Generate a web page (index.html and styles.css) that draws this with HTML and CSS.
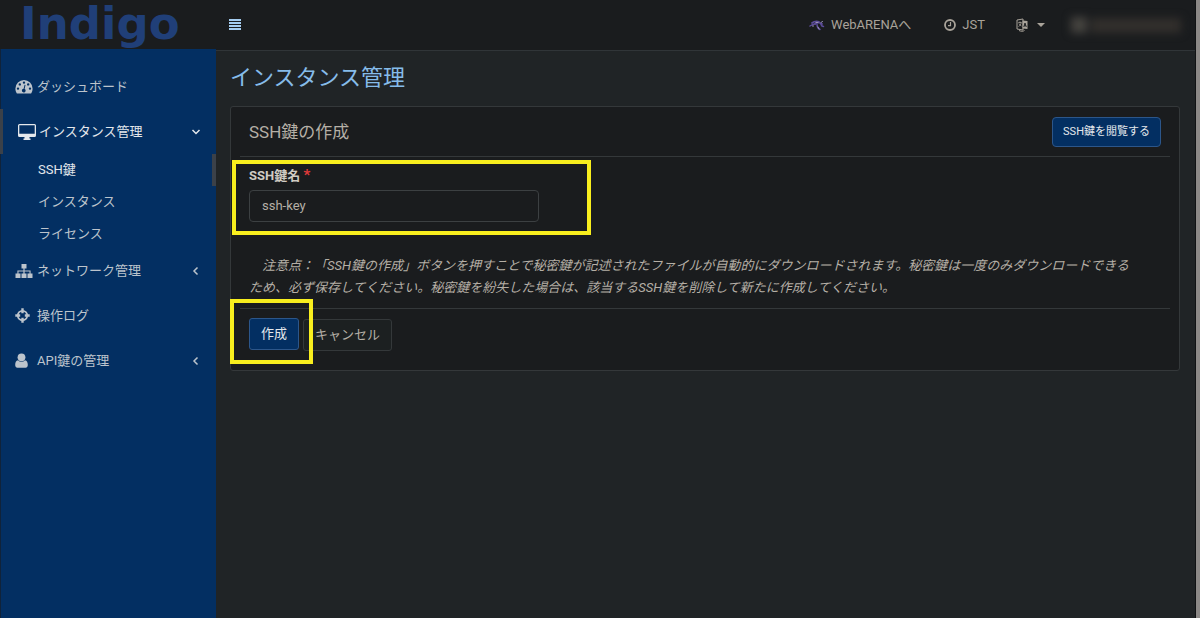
FILE: index.html
```html
<!DOCTYPE html>
<html lang="ja">
<head>
<meta charset="utf-8">
<meta name="viewport" content="width=device-width, initial-scale=1">
<title>Indigo</title>
<link rel="stylesheet" href="styles.css">
</head>
<body>
<div class="app">
  <aside class="sidebar">
    <a class="logo" href="#">Indigo</a>
    <nav class="menu">
      <a class="menu-item" href="#">
        <svg class="icon" width="18" height="16" viewBox="0 0 18 16" fill="currentColor"><path fill-rule="evenodd" d="M9 1a8.6 8.6 0 0 0-8.6 8.6c0 1.7.4 3.2 1.3 4.6.2.3.4.4.7.4h13.200c.3 0 .5-.1.7-.4.9-1.400 1.300-2.900 1.300-4.600A8.600 8.600 0 0 0 9 1zM3 8.400a1.200 1.200 0 1 1 0 2.400 1.200 1.200 0 0 1 0-2.400zM4.800 4.200a1.200 1.200 0 1 1 0 2.400 1.200 1.200 0 0 1 0-2.400zM9 2.400a1.200 1.200 0 1 1 0 2.400 1.200 1.200 0 0 1 0-2.400zM13.200 4.200a1.200 1.200 0 1 1 0 2.400 1.200 1.200 0 0 1 0-2.400zM15 8.400a1.200 1.200 0 1 1 0 2.400 1.200 1.200 0 0 1 0-2.400zM9.600 5.800l.9.2-.9 3.900c.8.400 1.200 1.200 1 2.100a1.900 1.900 0 1 1-2-2.300z"/></svg>
        <span>ダッシュボード</span>
      </a>
      <a class="menu-item is-active" href="#">
        <svg class="icon icon-screen" width="18" height="16" viewBox="0 0 18 16" fill="currentColor"><path fill-rule="evenodd" d="M1.500 0h15A1.500 1.500 0 0 1 18 1.500v10a1.500 1.500 0 0 1-1.500 1.500h-5v1.600h1V16h-7v-1.400h1V13h-5A1.500 1.500 0 0 1 0 11.500v-10A1.500 1.500 0 0 1 1.500 0zM1.300 1.300v8.400h15.400V1.300z"/></svg>
        <span>インスタンス管理</span>
        <svg class="arrow" width="10" height="10" viewBox="0 0 10 10"><path d="M1.500 3l3.500 3.500L8.500 3" fill="none" stroke="currentColor" stroke-width="1.500"/></svg>
      </a>
      <div class="submenu">
        <a class="sub-item is-current" href="#">SSH鍵</a>
        <a class="sub-item" href="#">インスタンス</a>
        <a class="sub-item" href="#">ライセンス</a>
      </div>
      <a class="menu-item" href="#">
        <svg class="icon" width="18" height="16" viewBox="0 0 18 16" fill="currentColor"><path d="M6.500 1h5v4.500H9.600v2h6v3h1.900V15H12.500v-4.500h2V8.600H9.600v1.900h1.900V15h-5v-4.500h1.900V8.600H3.500v1.900h2V15H.5v-4.500h1.900v-3h6v-2H6.500z"/></svg>
        <span>ネットワーク管理</span>
        <svg class="arrow" width="10" height="10" viewBox="0 0 10 10"><path d="M6.500 1.500L3 5l3.500 3.500" fill="none" stroke="currentColor" stroke-width="1.500"/></svg>
      </a>
      <a class="menu-item" href="#">
        <svg class="icon" width="18" height="16" viewBox="0 0 18 16"><g fill="none" stroke="currentColor"><circle cx="7.500" cy="7.500" r="4.700" stroke-width="1.800"/><path stroke-width="2.400" d="M7.500 .3v4.900M7.500 9.800v4.900M.3 7.500h4.900M9.800 7.500h4.900"/></g></svg>
        <span>操作ログ</span>
      </a>
      <a class="menu-item" href="#">
        <svg class="icon" width="18" height="16" viewBox="0 0 18 16" fill="currentColor"><circle cx="6.500" cy="4.300" r="3.900"/><path d="M3 7.200C1 7.600.2 9.400.2 12.100c0 1.500.9 2.700 2.200 2.700h8.200c1.300 0 2.200-1.200 2.200-2.700 0-2.700-.8-4.500-2.800-4.900a4.800 4.800 0 0 1-7 0z"/></svg>
        <span>API鍵の管理</span>
        <svg class="arrow" width="10" height="10" viewBox="0 0 10 10"><path d="M6.500 1.500L3 5l3.500 3.500" fill="none" stroke="currentColor" stroke-width="1.500"/></svg>
      </a>
    </nav>
  </aside>

  <div class="page">
    <header class="topbar">
      <button class="toggle" type="button" aria-label="メニュー">
        <svg width="12" height="12" viewBox="0 0 12 12" fill="currentColor"><path d="M0 0h12v2H0zM0 3h12v2H0zM0 6h12v2H0zM0 9h12v2H0z"/></svg>
      </button>
      <a class="top-link link-arena" href="#">
        <svg width="16" height="14" viewBox="0 0 16 14" fill="none" stroke="#5c4c99" stroke-linecap="round"><path stroke-width="1.800" d="M3 5c2-1.500 4-2 7-1.200M6 6c2-1.500 5-1.500 7 0"/><path stroke-width="1.500" d="M6 6c-2 0-3.500 1-5 2M8 6.500c0 2.500 1 4 3 5M12 6.500c.5 1.500 1.500 2 2.500 2"/><path stroke="#9a91b5" stroke-width="1" d="M4 7.500v1M7 4.500h2M12 4.500l1.500-1M9 9l1 2"/></svg>
        <span>WebARENAへ</span>
      </a>
      <a class="top-link link-zone" href="#">
        <svg width="12" height="12" viewBox="0 0 12 12" fill="none" stroke="currentColor"><circle cx="6" cy="6" r="5" stroke-width="1.800"/><path stroke-width="1.200" d="M6.500 3v3.600H4"/></svg>
        <span>JST</span>
      </a>
      <button class="top-link link-lang" type="button" aria-label="言語">
        <svg width="12" height="14" viewBox="0 0 12 14"><path d="M1 2l6-1v11l-6-1z" fill="none" stroke="currentColor"/><path d="M6.500 2.500L11.500 3v8l-5-.5z" fill="currentColor"/><path d="M2.300 4.500h3.200M4 3.500v1M2.500 8.500c1.500-.7 2.400-2 2.700-4M3 5.500c.5 1.200 1.300 2 2.500 2.500" stroke="currentColor" stroke-width=".8" fill="none"/><path d="M7.800 9L9 5l1.300 4M8.200 7.700h1.700" stroke="#1a1c1e" stroke-width=".9" fill="none"/><path d="M3 12.500c2 1 4 1 5.500 0" stroke="currentColor" fill="none"/></svg>
        <svg width="8" height="4" viewBox="0 0 8 4" fill="currentColor"><path d="M0 0h8L4 4z"/></svg>
      </button>
      <div class="account"><i class="avatar"></i><i class="account-name"></i></div>
    </header>

    <main class="content">
      <h1 class="page-title">インスタンス管理</h1>
      <form class="panel">
        <div class="panel-head">
          <h2 class="panel-title">SSH鍵の作成</h2>
          <button class="btn btn-primary btn-small" type="button">SSH鍵を閲覧する</button>
        </div>
        <div class="field">
          <label class="label" for="key-name">SSH鍵名 <span class="required">*</span></label>
          <input class="input" id="key-name" type="text" value="ssh-key">
        </div>
        <p class="note">　注意点：「SSH鍵の作成」ボタンを押すことで秘密鍵が記述されたファイルが自動的にダウンロードされます。秘密鍵は一度のみダウンロードできるため、必ず保存してください。秘密鍵を紛失した場合は、該当するSSH鍵を削除して新たに作成してください。</p>
        <div class="actions">
          <span class="marked"><button class="btn btn-primary" type="button">作成</button></span>
          <button class="btn btn-cancel" type="button">キャンセル</button>
        </div>
      </form>
    </main>
  </div>
  <div class="scroll-edge"></div>
</div>
</body>
</html>
```
FILE: styles.css
```css
*,
*::after {
  box-sizing: border-box;
}

body {
  margin: 0;
  background: #202426;
  color: #b5afa6;
  font-family: Roboto, "Noto Sans CJK JP", sans-serif;
  font-size: 13px;
  line-height: 22px;
}

a {
  color: inherit;
  text-decoration: none;
}

button,
input {
  font: inherit;
  color: inherit;
}

svg {
  display: block;
  flex: none;
}

.app {
  display: flex;
  min-height: 100vh;
}

.sidebar {
  flex: none;
  width: 216px;
  background: #032f62;
  border-left: 1px solid #10233a;
}

.logo {
  display: block;
  height: 49px;
  margin-left: -1px;
  padding-left: 20px;
  background: #1a1c1e;
  color: #203f78;
  font: bold 45px/48px "DejaVu Sans", sans-serif;
}

.menu {
  padding-top: 15px;
  color: #bcc4cc;
}

.menu-item {
  display: flex;
  align-items: center;
  gap: 4px;
  height: 45px;
  margin-left: -1px;
  padding: 0 15px;
}

.menu-item.is-active {
  gap: 3px;
  border-left: 3px solid #3b4149;
  color: #e4e8ec;
}

.arrow {
  margin-left: auto;
}

.submenu {
  margin-bottom: -2px;
}

.sub-item {
  display: flex;
  align-items: center;
  height: 32px;
  padding-left: 37px;
  border-right: 4px solid transparent;
}

.sub-item.is-current {
  border-right-color: #3b4149;
  color: #e4e8ec;
}

.page {
  flex: 1;
  min-width: 0;
}

.topbar {
  display: flex;
  align-items: center;
  height: 51px;
  padding: 0 14px 0 13px;
  background: #1a1c1e;
  border-bottom: 1px solid #303538;
}

.toggle {
  margin-right: auto;
  padding: 0;
  border: 0;
  background: none;
  color: #a5cdf0;
}

.top-link {
  display: flex;
  align-items: center;
  gap: 6px;
  padding: 0;
  border: 0;
  background: none;
  color: #a9a39a;
}

.link-zone {
  margin-left: 33px;
}

.link-lang {
  gap: 9px;
  margin-left: 31px;
}

.account {
  display: flex;
  align-items: center;
  gap: 4px;
  margin-left: 26px;
  filter: blur(4px);
}

.avatar {
  width: 16px;
  height: 16px;
  background: #45433f;
}

.account-name {
  width: 90px;
  height: 15px;
  background: #322f2c;
}

.content {
  padding: 14px 15px 15px 14px;
}

.page-title {
  margin: 0 0 15px;
  color: #86bcea;
  font-size: 22px;
  font-weight: 400;
  line-height: 26px;
}

.panel {
  padding: 0 9px 19px;
  background: #1a1c1e;
  border: 1px solid #34383a;
  border-radius: 3px;
}

.panel-head {
  display: flex;
  align-items: center;
  justify-content: space-between;
  height: 50px;
  padding: 0 9px;
  border-bottom: 1px solid #34383a;
}

.panel-title {
  margin: 0;
  font-size: 17px;
  font-weight: 400;
}

.field {
  position: relative;
  padding: 8px 9px 33px;
}

.field::after {
  content: "";
  position: absolute;
  top: 3px;
  left: -8px;
  width: 359px;
  height: 75px;
  border: 4px solid #f8ee1e;
  pointer-events: none;
}

.label {
  display: block;
  margin-bottom: 3px;
  color: #d0cbc3;
  font-weight: 700;
}

.required {
  color: #e03a3a;
  font-size: 15px;
  line-height: 1;
}

.input {
  display: block;
  width: 290px;
  height: 32px;
  padding: 0 12px 2px;
  background: #1a1c1e;
  border: 1px solid #3c4042;
  border-radius: 4px;
}

.note {
  margin: 0;
  padding: 0 30px 9px 9px;
  border-bottom: 1px solid #34383a;
  font-style: italic;
  text-spacing-trim: space-all;
}

.actions {
  display: flex;
  gap: 4px;
  padding: 9px 9px 0;
}

.marked {
  position: relative;
}

.marked::after {
  content: "";
  position: absolute;
  z-index: 1;
  top: -19px;
  left: -19px;
  width: 83px;
  height: 65px;
  border: 4px solid #f8ee1e;
  pointer-events: none;
}

.btn {
  display: block;
  height: 32px;
  padding: 0 11px;
  border: 1px solid #34383a;
  border-radius: 3px;
  line-height: 28px;
}

.btn-primary {
  background: #032f62;
  border-color: #2c568a;
  color: #e4e8ec;
}

.btn-small {
  height: 30px;
  padding: 0 10px;
  border-radius: 4px;
  font-size: 11px;
}

.btn-cancel {
  margin-top: 1px;
  background: #1c2021;
}

.scroll-edge {
  flex: none;
  width: 5px;
  background: #8c8987;
  border-left: 1px solid #111314;
}
```
